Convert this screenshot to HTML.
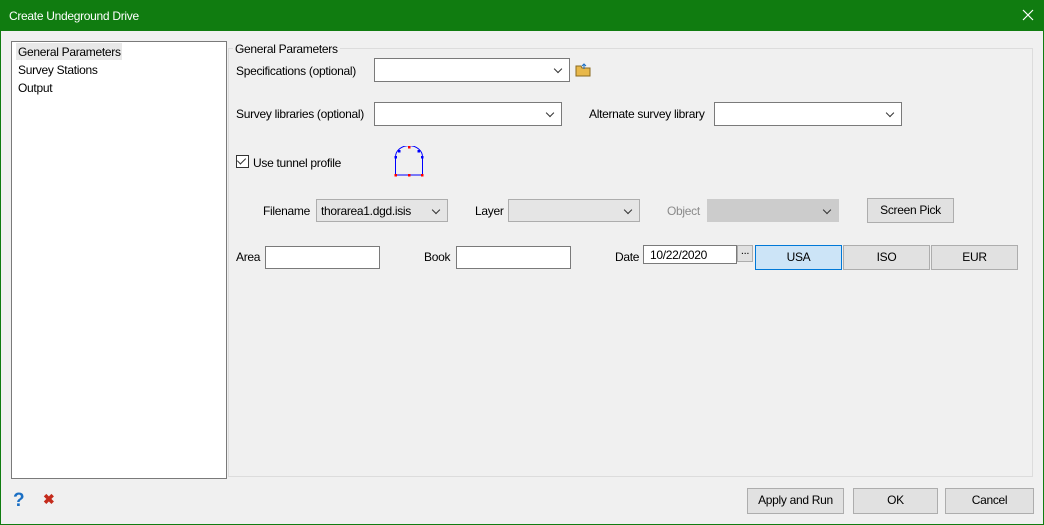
<!DOCTYPE html>
<html><head><style>
*{box-sizing:border-box}
body{margin:0;width:1044px;height:525px;background:#f0f0f0;font-family:"Liberation Sans",sans-serif;font-size:12px;letter-spacing:-0.3px;color:#000;position:relative;overflow:hidden}
.a{position:absolute}
.frame{left:0;top:0;width:1044px;height:525px;border:1px solid #107c10}
.title{left:0;top:0;width:1044px;height:31px;background:#107c10;color:#fff;font-size:12px;padding:9px 0 0 9px}
.box{background:#fff;border:1px solid #7a7a7a}
.cb{background:#fff;border:1px solid #7a7a7a}
.cb::after{content:"";position:absolute;right:8px;top:7px;width:5px;height:5px;border-right:1px solid #333;border-bottom:1px solid #333;transform:rotate(45deg)}
.dis{background:#e5e5e5;border:1px solid #adadad}
.btn{background:#e1e1e1;border:1px solid #adadad;text-align:center;line-height:23px}
</style></head><body>
<div class="a frame"></div>
<div class="a title">Create Undeground Drive</div>
<svg class="a" style="left:1022px;top:9px" width="12" height="12"><path d="M1 1L11 11M11 1L1 11" stroke="#fff" stroke-width="1.2"/></svg>
<div class="a box" style="left:11px;top:41px;width:216px;height:438px"></div>
<div class="a" style="left:16px;top:43px;width:106px;height:17px;background:#e8e8e8"></div>
<div class="a" style="left:18px;top:45px">General Parameters</div>
<div class="a" style="left:18px;top:63px">Survey Stations</div>
<div class="a" style="left:18px;top:81px">Output</div>
<div class="a" style="left:228px;top:48px;width:805px;height:429px;border:1px solid #dcdcdc"></div>
<div class="a" style="left:233px;top:42px;background:#f0f0f0;padding:0 2px">General Parameters</div>
<div class="a" style="left:236px;top:64px">Specifications (optional)</div>
<div class="a cb" style="left:374px;top:58px;width:196px;height:24px"></div>
<svg class="a" style="left:575px;top:63px" width="16" height="14"><path d="M1 3h5l1 2h8v8H1z" fill="#e8b84a" stroke="#8a6a20"/><path d="M9 1v5M7 3l2-2 2 2" stroke="#1a6fc4" fill="none"/></svg>
<div class="a" style="left:236px;top:107px">Survey libraries (optional)</div>
<div class="a cb" style="left:374px;top:102px;width:188px;height:24px"></div>
<div class="a" style="left:589px;top:107px">Alternate survey library</div>
<div class="a cb" style="left:714px;top:102px;width:188px;height:24px"></div>
<div class="a" style="left:236px;top:155px;width:13px;height:13px;border:1px solid #333;background:#fff"></div>
<div class="a" style="left:239px;top:156px;width:5px;height:8px;border-right:1.5px solid #333;border-bottom:1.5px solid #333;transform:rotate(45deg)"></div>
<div class="a" style="left:253px;top:156px">Use tunnel profile</div>
<svg class="a" style="left:393px;top:146px" width="32" height="32"><path d="M2.5 29V11A13 11 0 0 1 29.5 11V29H2.5" fill="none" stroke="#0000ff"/><g fill="#00f"><rect x="1.5" y="10" width="2.5" height="2.5"/><rect x="28" y="10" width="2.5" height="2.5"/><rect x="5" y="4" width="2.5" height="2.5"/><rect x="24.5" y="4" width="2.5" height="2.5"/></g><g fill="#f00"><rect x="15" y="0" width="2.5" height="2.5"/><rect x="1.5" y="28" width="2.5" height="2.5"/><rect x="15" y="28" width="2.5" height="2.5"/><rect x="28" y="28" width="2.5" height="2.5"/></g></svg>
<div class="a" style="left:263px;top:204px">Filename</div>
<div class="a cb dis" style="left:316px;top:199px;width:132px;height:23px;padding:4px 0 0 4px">thorarea1.dgd.isis</div>
<div class="a" style="left:475px;top:204px">Layer</div>
<div class="a cb dis" style="left:508px;top:199px;width:132px;height:23px"></div>
<div class="a" style="left:667px;top:204px;color:#8a8a8a">Object</div>
<div class="a cb dis" style="left:707px;top:199px;width:132px;height:23px;background:#ccc;border-color:#ccc"></div>
<div class="a btn" style="left:867px;top:198px;width:87px;height:25px">Screen Pick</div>
<div class="a" style="left:236px;top:250px">Area</div>
<div class="a box" style="left:265px;top:246px;width:115px;height:23px"></div>
<div class="a" style="left:424px;top:250px">Book</div>
<div class="a box" style="left:456px;top:246px;width:115px;height:23px"></div>
<div class="a" style="left:615px;top:250px">Date</div>
<div class="a box" style="left:643px;top:245px;width:94px;height:19px;padding:2px 0 0 6px">10/22/2020</div>
<div class="a btn" style="left:737px;top:245px;width:16px;height:17px;line-height:10px;font-size:11px">...</div>
<div class="a btn" style="left:755px;top:245px;width:87px;height:25px;background:#cce4f7;border-color:#0078d7">USA</div>
<div class="a btn" style="left:843px;top:245px;width:87px;height:25px">ISO</div>
<div class="a btn" style="left:931px;top:245px;width:87px;height:25px">EUR</div>
<div class="a" style="left:13px;top:490px;color:#1a6fc4;font-weight:bold;font-size:19px">?</div>
<div class="a" style="left:43px;top:491px;color:#c42b1c;font-weight:bold;font-size:14px">✖</div>
<div class="a btn" style="left:747px;top:488px;width:97px;height:26px">Apply and Run</div>
<div class="a btn" style="left:853px;top:488px;width:85px;height:26px">OK</div>
<div class="a btn" style="left:945px;top:488px;width:89px;height:26px">Cancel</div>
</body></html>
